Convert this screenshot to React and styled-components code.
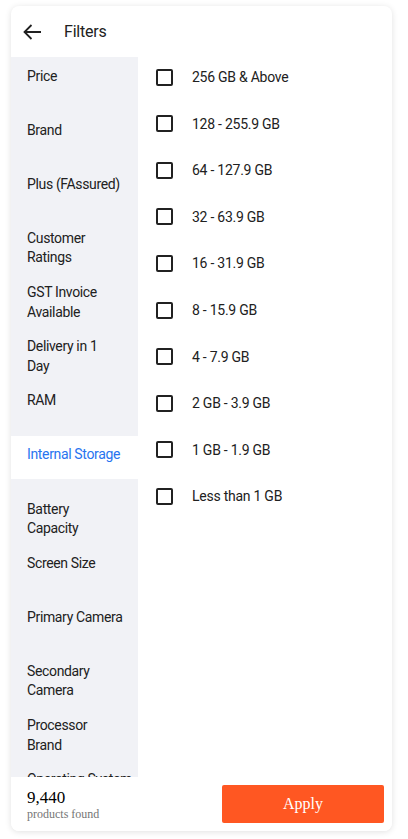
import styled, { createGlobalStyle } from "styled-components";

const GlobalStyle = createGlobalStyle`
  html, body {
    margin: 0;
    padding: 0;
    background: #ffffff;
  }
  * {
    box-sizing: border-box;
  }
`;

const Page = styled.div`
  padding: 6px 16px 8px 11px;
`;

const Card = styled.div`
  height: 825px;
  display: flex;
  flex-direction: column;
  background: #fff;
  border-radius: 8px;
  box-shadow: rgba(0, 0, 0, 0.12) 0px 1px 6px;
  overflow: hidden;
  font-family: Roboto, "Liberation Sans", sans-serif;
  color: #212121;
`;

const Header = styled.div`
  height: 51px;
  display: flex;
  align-items: center;
  padding: 0 11px;
  flex-shrink: 0;
`;

const BackButton = styled.button`
  border: none;
  background: none;
  padding: 0;
  width: 20px;
  height: 20px;
  display: flex;
  align-items: center;
  justify-content: center;
  margin-right: 22px;
  cursor: pointer;
`;

const Title = styled.span`
  font-size: 16px;
  letter-spacing: -0.2px;
  color: #212121;
`;

const Body = styled.div`
  flex: 1;
  display: flex;
  min-height: 0;
`;

const Sidebar = styled.ul`
  list-style: none;
  margin: 0;
  padding: 0;
  width: 127px;
  flex-shrink: 0;
  background: #f1f2f6;
  overflow: hidden;
`;

const SideItem = styled.li`
  height: 43px;
  margin-bottom: 11.14px;
  padding: 9.5px 2px 0 16px;
  font-size: 14px;
  letter-spacing: -0.35px;
  line-height: 19.5px;
  white-space: pre-line;
  color: ${(p) => (p.active ? "#2874f0" : "#212121")};
  background: ${(p) => (p.active ? "#fff" : "transparent")};
  cursor: pointer;
`;

const Options = styled.ul`
  list-style: none;
  margin: 0;
  padding: 0 0 0 18px;
  flex: 1;
`;

const Option = styled.li`
  height: 46.56px;
  display: flex;
  align-items: center;
  font-size: 14px;
  letter-spacing: -0.25px;
  color: #212121;
  &:first-child {
    margin-top: -3px;
  }
`;

const Box = styled.span`
  width: 17px;
  height: 17px;
  border: 2px solid #212121;
  border-radius: 2px;
  margin-right: 19px;
  flex-shrink: 0;
`;

const Footer = styled.div`
  height: 54px;
  flex-shrink: 0;
  display: flex;
  align-items: center;
  justify-content: space-between;
  padding: 0 8px 0 16px;
  background: #fff;
  font-family: "Liberation Serif", "Times New Roman", serif;
`;

const Count = styled.div`
  display: flex;
  flex-direction: column;
  margin-top: 2px;
`;

const Total = styled.span`
  font-size: 17px;
  color: #000;
  line-height: 18px;
`;

const Found = styled.span`
  font-size: 12px;
  color: #757575;
  line-height: 14px;
`;

const ApplyButton = styled.button`
  width: 162px;
  height: 38px;
  border: none;
  border-radius: 2px;
  background: #ff5722;
  color: #fff;
  font-family: "Liberation Serif", "Times New Roman", serif;
  font-size: 16px;
  cursor: pointer;
`;

const filters = [
  "Price",
  "Brand",
  "Plus (FAssured)",
  "Customer\nRatings",
  "GST Invoice\nAvailable",
  "Delivery in 1\nDay",
  "RAM",
  "Internal Storage",
  "Battery\nCapacity",
  "Screen Size",
  "Primary Camera",
  "Secondary\nCamera",
  "Processor\nBrand",
  "Operating System",
];

const storage = [
  "256 GB & Above",
  "128 - 255.9 GB",
  "64 - 127.9 GB",
  "32 - 63.9 GB",
  "16 - 31.9 GB",
  "8 - 15.9 GB",
  "4 - 7.9 GB",
  "2 GB - 3.9 GB",
  "1 GB - 1.9 GB",
  "Less than 1 GB",
];

const App = () => {
  return (
    <Page>
      <GlobalStyle />
      <Card>
        <Header>
          <BackButton>
            <svg width="19" height="16" viewBox="0 0 19 16" fill="none">
              <path
                d="M18 8H1.5M8.5 1L1.5 8l7 7"
                stroke="#212121"
                strokeWidth="1.8"
              />
            </svg>
          </BackButton>
          <Title>Filters</Title>
        </Header>
        <Body>
          <Sidebar>
            {filters.map((f) => (
              <SideItem key={f} active={f === "Internal Storage"}>
                {f}
              </SideItem>
            ))}
          </Sidebar>
          <Options>
            {storage.map((s) => (
              <Option key={s}>
                <Box />
                {s}
              </Option>
            ))}
          </Options>
        </Body>
        <Footer>
          <Count>
            <Total>9,440</Total>
            <Found>products found</Found>
          </Count>
          <ApplyButton>Apply</ApplyButton>
        </Footer>
      </Card>
    </Page>
  );
};

export default App;
